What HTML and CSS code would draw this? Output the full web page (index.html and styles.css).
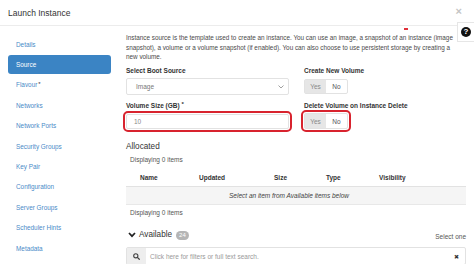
FILE: index.html
```html
<!DOCTYPE html>
<html>
<head>
<meta charset="utf-8">
<link rel="stylesheet" href="styles.css">
</head>
<body>
<div class="modal">
  <div class="header">
    <span class="title">Launch Instance</span>
    <span class="close">×</span>
  </div>
  <span class="red-mark"></span>
  <div class="help"><span class="help-circle">?</span></div>
  <div class="body">
    <nav class="sidebar">
      <a class="nav-item">Details</a>
      <a class="nav-item active">Source</a>
      <a class="nav-item">Flavour <sup class="req">*</sup></a>
      <a class="nav-item">Networks</a>
      <a class="nav-item">Network Ports</a>
      <a class="nav-item">Security Groups</a>
      <a class="nav-item">Key Pair</a>
      <a class="nav-item">Configuration</a>
      <a class="nav-item">Server Groups</a>
      <a class="nav-item">Scheduler Hints</a>
      <a class="nav-item">Metadata</a>
    </nav>
    <main class="content">
      <p class="desc">Instance source is the template used to create an instance. You can use an image, a snapshot of an instance (image snapshot), a volume or a volume snapshot (if enabled). You can also choose to use persistent storage by creating a<br>new volume.</p>
      <div class="form-row">
        <div class="col-left">
          <div class="label">Select Boot Source</div>
          <div class="select"><span>Image</span><svg class="chev" width="6" height="4" viewBox="0 0 6 4"><path d="M0.5 0.5 L3 3 L5.5 0.5" fill="none" stroke="#888" stroke-width="0.8"/></svg></div>
        </div>
        <div class="col-right">
          <div class="label">Create New Volume</div>
          <div class="toggle"><span class="tbtn on">Yes</span><span class="tbtn">No</span></div>
        </div>
      </div>
      <div class="form-row row2">
        <div class="col-left">
          <div class="label">Volume Size (GB) <sup class="req-dark">*</sup></div>
          <div class="input hl">10</div>
        </div>
        <div class="col-right">
          <div class="label">Delete Volume on Instance Delete</div>
          <div class="toggle tall hl"><span class="tbtn on">Yes</span><span class="tbtn">No</span></div>
        </div>
      </div>
      <h3 class="section">Allocated</h3>
      <div class="count">Displaying 0 items</div>
      <div class="table">
        <div class="thead">
          <span class="th first">Name</span>
          <span class="th">Updated</span>
          <span class="th">Size</span>
          <span class="th">Type</span>
          <span class="th">Visibility</span>
        </div>
        <div class="empty">Select an item from Available items below</div>
      </div>
      <div class="count count2">Displaying 0 items</div>
      <div class="avail-row">
        <h3 class="section avail">
          <svg class="avail-chev" width="8" height="6" viewBox="0 0 8 6"><path d="M1 1 L4 4.2 L7 1" fill="none" stroke="#222" stroke-width="1.7"/></svg>
          Available <span class="badge">24</span>
        </h3>
        <span class="select-one">Select one</span>
      </div>
      <div class="search">
        <span class="search-icon"><svg width="7" height="7" viewBox="0 0 10 10"><circle cx="4" cy="4" r="3" fill="none" stroke="#444" stroke-width="1.6"/><path d="M6.2 6.2 L9 9" stroke="#444" stroke-width="1.8" stroke-linecap="round"/></svg></span>
        <span class="placeholder">Click here for filters or full text search.</span>
        <span class="search-x">✖</span>
      </div>
    </main>
  </div>
</div>
</body>
</html>
```

FILE: styles.css
```css
* { box-sizing: border-box; }
html, body {
  margin: 0;
  padding: 0;
  width: 474px;
  height: 264px;
  overflow: hidden;
  background: #fff;
  font-family: "Liberation Sans", Arial, sans-serif;
  color: #333;
}
.modal { position: relative; width: 474px; height: 264px; }
.header {
  height: 26px;
  border-bottom: 1px solid #ececec;
  display: flex;
  align-items: center;
  justify-content: space-between;
  padding: 0 12px 0 8px;
}
.title { font-size: 8.5px; color: #333; }
.close { font-size: 11px; color: #c4c4c4; font-weight: bold; margin-top: -4px; }
.red-mark {
  position: absolute;
  left: 404px;
  top: 28px;
  width: 4px;
  height: 2px;
  background: #e0303a;
}
.help {
  position: absolute;
  left: 457px;
  top: 22px;
  width: 20px;
  height: 20px;
  background: #fff;
  border: 1px solid #e6e6e6;
  border-right: none;
  display: flex;
  align-items: center;
  justify-content: center;
  padding-right: 3px;
}
.help-circle {
  width: 10px;
  height: 10px;
  border-radius: 50%;
  background: #111;
  color: #fff;
  font-size: 8px;
  font-weight: bold;
  line-height: 10px;
  text-align: center;
}
.body { display: flex; }
.sidebar {
  width: 111px;
  padding: 8px 0 0 8px;
  display: flex;
  flex-direction: column;
}
.nav-item {
  height: 20.4px;
  display: flex;
  align-items: center;
  padding-left: 8px;
  font-size: 6.4px;
  color: #4a8bc8;
  border-radius: 3px;
}
.nav-item.active { background: #3b84c4; color: #fff; height: 19.6px; margin: 0.4px 0; }
.req { font-size: 6px; color: #333; vertical-align: top; position: relative; top: -1px; margin-left: 1px; }
.req-dark { font-size: 6px; color: #333; vertical-align: top; position: relative; top: -1px; }
.content {
  margin-left: 15px;
  width: 340px;
  padding-top: 7px;
}
.desc {
  margin: 0;
  font-size: 6.35px;
  line-height: 9.5px;
  color: #4a4a4a;
  width: 334px;
}
.form-row { display: flex; gap: 15px; margin-top: 4px; }
.form-row.row2 { margin-top: 5.5px; }
.col-left { width: 163px; }
.col-right { flex: 1; }
.label { font-size: 6.5px; font-weight: bold; line-height: 9px; color: #333; }
.select {
  margin-top: 3.5px;
  height: 17px;
  border: 1px solid #e2e2e2;
  border-radius: 2px;
  display: flex;
  align-items: center;
  justify-content: space-between;
  padding: 0 4px 0 9px;
  font-size: 6.5px;
  color: #777;
}
.toggle {
  margin-top: 4px;
  display: inline-flex;
  height: 15px;
  border: 1px solid #e2e2e2;
  border-radius: 2px;
}
.toggle.tall { height: 16px; margin-top: 3.5px; }
.tbtn {
  width: 21px;
  display: flex;
  align-items: center;
  justify-content: center;
  font-size: 6.5px;
  color: #555;
}
.tbtn.on { background: #e6e6e6; color: #888; }
.input {
  margin-top: 4.5px;
  height: 15px;
  border: 1px solid #e2e2e2;
  border-radius: 2px;
  display: flex;
  align-items: center;
  padding-left: 7px;
  font-size: 6.5px;
  color: #888;
}
.hl { outline: 2px solid #d8232e; outline-offset: 1px; }
.section {
  margin: 13px 0 0 0;
  font-size: 8.2px;
  font-weight: normal;
  line-height: 10px;
  color: #333;
}
.count {
  margin-top: 4px;
  padding-left: 4px;
  font-size: 6.5px;
  line-height: 8px;
  color: #555;
}
.table { margin-top: 4px; }
.thead {
  display: grid;
  grid-template-columns: 73px 75px 52px 53px 1fr;
  height: 19px;
  align-items: center;
  border-bottom: 1px solid #e2e2e2;
}
.th { font-size: 6.5px; font-weight: bold; color: #333; }
.th.first { padding-left: 14px; }
.empty {
  height: 18px;
  background: #f5f5f5;
  border-bottom: 1px solid #e8e8e8;
  display: flex;
  align-items: center;
  justify-content: center;
  font-size: 6.5px;
  font-style: italic;
  color: #444;
  padding-right: 14px;
}
.count2 { margin-top: 4px; }
.avail-row {
  margin-top: 13px;
  display: flex;
  justify-content: space-between;
  align-items: flex-end;
}
.section.avail {
  margin: 0;
  display: flex;
  align-items: center;
  gap: 2px;
  padding-left: 2px;
}
.avail-chev { margin-right: 1px; }
.badge {
  background: #b5b5b5;
  color: #fff;
  font-size: 6px;
  border-radius: 5px;
  padding: 1px 3px;
  line-height: 7px;
  margin-left: 2px;
}
.select-one { font-size: 6.5px; color: #555; line-height: 8px; margin-bottom: -1px; }
.search {
  margin-top: 7px;
  height: 18px;
  border: 1px solid #e2e2e2;
  border-radius: 2px;
  display: flex;
  align-items: center;
}
.search-icon {
  width: 19px;
  height: 100%;
  background: #eee;
  display: flex;
  align-items: center;
  justify-content: center;
}
.placeholder { flex: 1; padding-left: 4px; font-size: 6.5px; color: #999; }
.search-x { font-size: 6px; color: #333; padding-right: 6px; }
```
